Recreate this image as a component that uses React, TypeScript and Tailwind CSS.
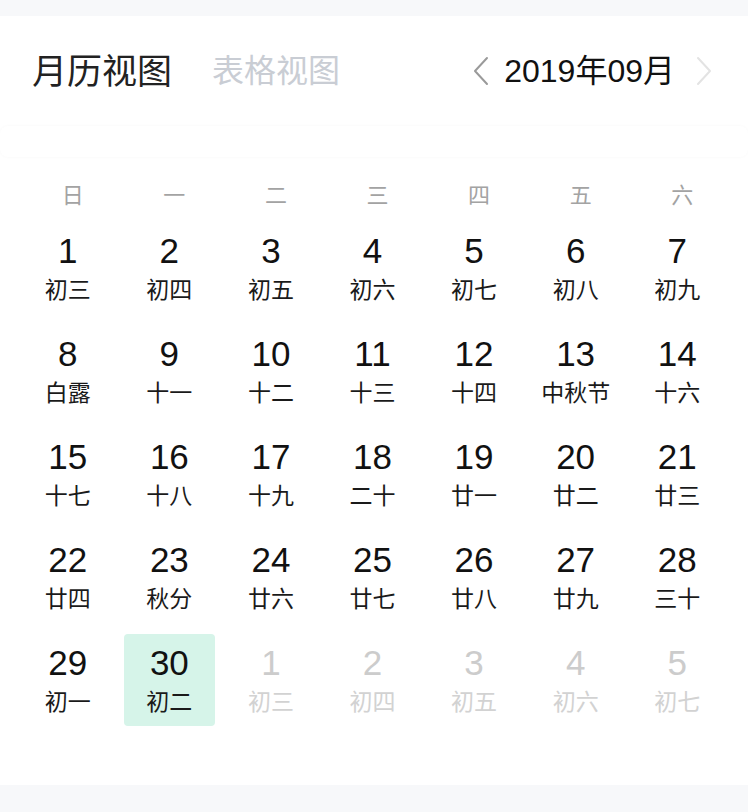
import React from 'react';

const FONT = { fontFamily: '"Liberation Sans", "Noto Sans CJK SC", sans-serif' };

type Day = { d: number; lunar: string; other?: boolean; selected?: boolean };

const WEEK = ['日', '一', '二', '三', '四', '五', '六'];

const DAYS: Day[] = [
  { d: 1, lunar: '初三' }, { d: 2, lunar: '初四' }, { d: 3, lunar: '初五' }, { d: 4, lunar: '初六' },
  { d: 5, lunar: '初七' }, { d: 6, lunar: '初八' }, { d: 7, lunar: '初九' },
  { d: 8, lunar: '白露' }, { d: 9, lunar: '十一' }, { d: 10, lunar: '十二' }, { d: 11, lunar: '十三' },
  { d: 12, lunar: '十四' }, { d: 13, lunar: '中秋节' }, { d: 14, lunar: '十六' },
  { d: 15, lunar: '十七' }, { d: 16, lunar: '十八' }, { d: 17, lunar: '十九' }, { d: 18, lunar: '二十' },
  { d: 19, lunar: '廿一' }, { d: 20, lunar: '廿二' }, { d: 21, lunar: '廿三' },
  { d: 22, lunar: '廿四' }, { d: 23, lunar: '秋分' }, { d: 24, lunar: '廿六' }, { d: 25, lunar: '廿七' },
  { d: 26, lunar: '廿八' }, { d: 27, lunar: '廿九' }, { d: 28, lunar: '三十' },
  { d: 29, lunar: '初一' }, { d: 30, lunar: '初二', selected: true },
  { d: 1, lunar: '初三', other: true }, { d: 2, lunar: '初四', other: true }, { d: 3, lunar: '初五', other: true },
  { d: 4, lunar: '初六', other: true }, { d: 5, lunar: '初七', other: true },
];

const Chevron = ({ dir, color }: { dir: 'left' | 'right'; color: string }) => (
  <svg width="18" height="30" viewBox="0 0 18 30" fill="none">
    <path
      d={dir === 'left' ? 'M15 2 L3 15 L15 28' : 'M3 2 L15 15 L3 28'}
      stroke={color}
      strokeWidth="2"
      strokeLinecap="round"
      strokeLinejoin="round"
    />
  </svg>
);

export default function App() {
  return (
    <div className="w-[748px] min-h-[812px] bg-[#f7f8fa] pt-[16px]" style={FONT}>
      <div className="bg-white pb-[54px]">
        {/* header */}
        <div className="h-[110px] flex items-center pl-[32px] pr-[35px]">
          <span className="text-[35px] leading-none text-[#222222]">月历视图</span>
          <span className="text-[32px] leading-none text-[#c9cdd4] ml-[40px]">表格视图</span>
          <div className="ml-auto flex items-center">
            <Chevron dir="left" color="#9a9a9a" />
            <span className="text-[32px] leading-none text-[#111111] ml-[14px] mr-[20px]">2019年09月</span>
            <Chevron dir="right" color="#e3e3e3" />
          </div>
        </div>

        <div className="h-[31px] rounded-[8px] shadow-[0_0_3px_rgba(0,0,0,0.035)]" />

        {/* weekdays */}
        <div className="grid grid-cols-7 h-[40px] mt-[19px] pl-[22px] pr-[15px] items-center">
          {WEEK.map((w) => (
            <div key={w} className="text-center text-[22px] leading-none text-[#a3a3a3]">{w}</div>
          ))}
        </div>

        {/* days */}
        <div className="grid grid-cols-7 pl-[17px] pr-[20px]">
          {DAYS.map((day, i) => (
            <div key={i} className="h-[103px] px-[5px] py-[5.5px]">
              <div
                className={`h-[92px] rounded-[4px] flex flex-col items-center pt-[9px] ${day.selected ? 'bg-[#d6f4e9]' : ''}`}
              >
                <span className={`text-[35px] leading-[40px] ${day.other ? 'text-[#cccccc]' : 'text-[#111111]'}`}>
                  {day.d}
                </span>
                <span className={`text-[23px] leading-[28px] mt-[5px] ${day.other ? 'text-[#d2d2d2]' : 'text-[#1a1a1a]'}`}>
                  {day.lunar}
                </span>
              </div>
            </div>
          ))}
        </div>
      </div>
    </div>
  );
}
